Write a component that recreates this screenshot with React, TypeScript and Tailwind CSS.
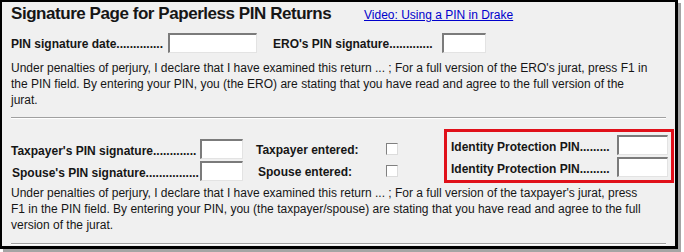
import React from "react";

function Field({ w }: { w: string }) {
  return (
    <div
      className={`${w} h-[20px] shrink-0 bg-white border-t-2 border-l-2 border-r border-b border-t-[#7b7b7b] border-l-[#7b7b7b] border-r-[#e3e3e3] border-b-[#e3e3e3]`}
    />
  );
}

function Check() {
  return (
    <div className="w-[12px] h-[12px] shrink-0 bg-white border border-t-[#808080] border-l-[#808080] border-r-[#dcdcdc] border-b-[#dcdcdc]" />
  );
}

function App() {
  return (
    <div className="w-[684px] h-[252px] bg-white font-['Liberation_Sans',Arial,sans-serif] text-[#161616]">
      <div className="w-[678px] h-[249px] border-l-2 border-t-2 border-r-[3px] border-b-[3px] border-black bg-[#f0f0f0] shadow-[3px_3px_0_#a4a4a4] pl-[9px] pr-[9px]">
        {/* header */}
        <div className="flex items-baseline h-[29px] pt-[1px] whitespace-nowrap">
          <h1 className="w-[353px] text-[17px] font-bold leading-[22px] tracking-[-0.45px]">
            Signature Page for Paperless PIN Returns
          </h1>
          <a href="#" className="text-[12px] text-[#0000cc] underline">
            Video: Using a PIN in Drake
          </a>
        </div>

        {/* ERO row */}
        <div className="flex items-center h-[20px] mt-[2px] text-[12px] font-bold whitespace-nowrap">
          <span className="w-[157px] pt-[2px]">PIN signature date..............</span>
          <Field w="w-[89px]" />
          <span className="ml-[16px] w-[169px] pt-[2px]">ERO's PIN signature.............</span>
          <Field w="w-[44px]" />
        </div>

        <p className="mt-[7px] text-[12px] leading-[16px] pr-[16px]">
          Under penalties of perjury, I declare that I have examined this return ... ; For a full version of the ERO's jurat, press F1 in the PIN field. By entering your PIN, you (the ERO) are stating that you have read and agree to the full version of the jurat.
        </p>

        <div className="mt-[9px] w-[655px] h-[2px] border-t border-t-[#a0a0a0] border-b border-b-white" />

        {/* taxpayer section */}
        <div className="flex mt-[10px] text-[12px] font-bold whitespace-nowrap">
          <div className="flex flex-col gap-[2px] pt-[10px]">
            <div className="flex items-center h-[20px]">
              <span className="w-[189px] pt-[4px]">Taxpayer's PIN signature.............</span>
              <Field w="w-[43px]" />
              <span className="ml-[13px] w-[130px] pt-[1px]">Taxpayer entered:</span>
              <Check />
            </div>
            <div className="flex items-center h-[20px]">
              <span className="w-[189px] pl-[1px] pt-[4px]">Spouse's PIN signature................</span>
              <Field w="w-[43px]" />
              <span className="ml-[13px] pl-[2px] w-[130px] pt-[1px]">Spouse entered:</span>
              <Check />
            </div>
          </div>
          <div className="ml-[46px] w-[230px] h-[54px] border-[3px] border-[#e0101a] pt-[3px] pl-[4px] pr-[3px] flex flex-col gap-[2px]">
            <div className="flex items-center h-[20px]">
              <span className="w-[166px] pt-[4px]">Identity Protection PIN.........</span>
              <Field w="w-[51px]" />
            </div>
            <div className="flex items-center h-[20px]">
              <span className="w-[166px] pt-[4px]">Identity Protection PIN.........</span>
              <Field w="w-[51px]" />
            </div>
          </div>
        </div>

        <p className="mt-[2px] text-[12px] leading-[16px] pr-[16px]">
          Under penalties of perjury, I declare that I have examined this return ... ; For a full version of the taxpayer's jurat, press F1 in the PIN field. By entering your PIN, you (the taxpayer/spouse) are stating that you have read and agree to the full version of the jurat.
        </p>

        <div className="mt-[10px] w-[655px] h-[2px] border-t border-t-[#a0a0a0] border-b border-b-white" />
      </div>
    </div>
  );
}

export default App;
